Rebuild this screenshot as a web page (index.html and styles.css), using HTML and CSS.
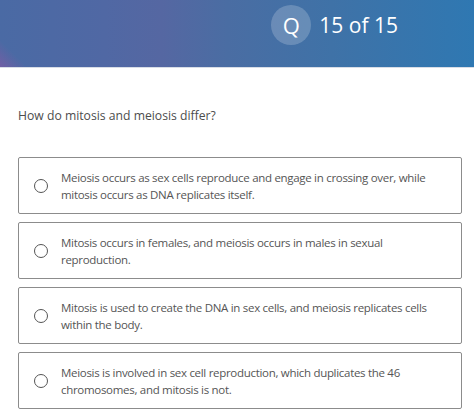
FILE: index.html
```html
<!DOCTYPE html>
<html>
<head>
<meta charset="utf-8">
<link rel="stylesheet" href="styles.css">
</head>
<body>
<header class="top">
  <div class="counter">
    <span class="badge">Q</span>
    <span class="count">15 of 15</span>
  </div>
</header>
<main class="quiz">
  <p class="question">How do mitosis and meiosis differ?</p>
  <ul class="options">
    <li class="option"><span class="radio"></span><span class="label">Meiosis occurs as sex cells reproduce and engage in crossing over, while mitosis occurs as DNA replicates itself.</span></li>
    <li class="option"><span class="radio"></span><span class="label">Mitosis occurs in females, and meiosis occurs in males in sexual reproduction.</span></li>
    <li class="option"><span class="radio"></span><span class="label">Mitosis is used to create the DNA in sex cells, and meiosis replicates cells within the body.</span></li>
    <li class="option"><span class="radio"></span><span class="label">Meiosis is involved in sex cell reproduction, which duplicates the 46 chromosomes, and mitosis is not.</span></li>
  </ul>
</main>
</body>
</html>
```
FILE: styles.css
```css
* { box-sizing: border-box; }
html, body { margin: 0; padding: 0; background: #fff; }
body { font-family: "Open Sans", "Liberation Sans", sans-serif; color: #555; }

.top {
  height: 68px;
  display: flex;
  justify-content: flex-end;
  align-items: flex-start;
  padding: 5px 76px 0 0;
  background:
    linear-gradient(45deg, rgba(145,85,165,0.55) 0, rgba(145,85,165,0) 5%),
    linear-gradient(90deg, #4a6aa4 0%, #5068a4 22%, #5567a2 34%, #4a6da3 48%, #3f72a7 70%, #2f78b2 100%);
  border-bottom: 1px solid #d8dde6;
}
.counter { display: flex; align-items: center; gap: 8px; }
.badge {
  width: 40px; height: 40px; border-radius: 50%;
  background: rgba(255,255,255,0.2);
  color: #fff; font-size: 22px; line-height: 40px; text-align: center;
}
.count { color: #fff; font-size: 21px; line-height: 40px; }

.quiz { padding: 39px 12px 0 18px; }
.question { margin: 0 0 33px; font-size: 12.2px; line-height: 17px; color: #4d4d4d; }
.options { list-style: none; margin: 0; padding: 0; display: flex; flex-direction: column; gap: 8px; }
.option {
  height: 57px; border: 1px solid #8c8c8c; border-radius: 2px;
  display: flex; align-items: center; padding: 0 20px 0 15px;
}
.radio {
  width: 14px; height: 14px; border: 1px solid #555; border-radius: 50%;
  flex: none; margin-right: 13px; margin-top: 1px;
}
.label { font-size: 11.5px; letter-spacing: -0.3px; line-height: 17px; color: #555; max-width: 380px; }
```
